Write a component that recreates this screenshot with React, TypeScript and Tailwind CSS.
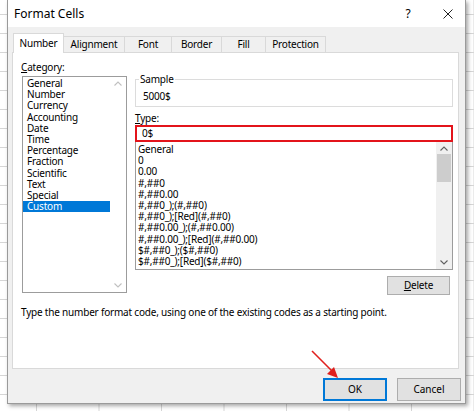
import React from "react";

const categories = ["General","Number","Currency","Accounting","Date","Time","Percentage","Fraction","Scientific","Text","Special","Custom"];
const formats = ["General","0","0.00","#,##0","#,##0.00","#,##0_);(#,##0)","#,##0_);[Red](#,##0)","#,##0.00_);(#,##0.00)","#,##0.00_);[Red](#,##0.00)","$#,##0_);($#,##0)","$#,##0_);[Red]($#,##0)"];
const tabs: { label: string; w: string }[] = [
  { label: "Number", w: "w-[51px]" },
  { label: "Alignment", w: "w-[61px]" },
  { label: "Font", w: "w-[47px]" },
  { label: "Border", w: "w-[50px]" },
  { label: "Fill", w: "w-[44px]" },
  { label: "Protection", w: "w-[60px]" },
];

function Chevron({ up, color }: { up?: boolean; color: string }) {
  return (
    <svg width="8" height="5" viewBox="0 0 8 5">
      <polyline
        points={up ? "0.5,4.5 4,1 7.5,4.5" : "0.5,0.5 4,4 7.5,0.5"}
        fill="none"
        stroke={color}
        strokeWidth="1.1"
      />
    </svg>
  );
}

export default function App() {
  return (
    <div className="relative w-[474px] h-[411px] overflow-hidden bg-white bg-[linear-gradient(to_bottom,#d6d6d6_1px,transparent_1px),linear-gradient(to_right,#d6d6d6_1px,transparent_1px)] bg-[size:62.5px_19px] bg-[position:36px_14px] font-['Noto_Sans',sans-serif] text-black">
      <div className="ml-[7px] w-[459px] h-[404px] flex flex-col bg-[#f0f0f0] border border-[#9a9a9a] border-t-0 shadow-[2px_2px_4px_rgba(0,0,0,0.35)]">
        {/* title bar */}
        <div className="h-[27px] bg-white flex items-center pl-[6px]">
          <span className="text-[12px] leading-none">Format Cells</span>
          <div className="ml-auto flex items-center h-full">
            <div className="w-[34px] flex justify-center text-[12px] leading-none">?</div>
            <div className="w-[6px]" />
            <div className="w-[34px] flex justify-center">
              <svg width="10" height="10" viewBox="0 0 10 10">
                <path d="M0.5 0.5 L9.5 9.5 M9.5 0.5 L0.5 9.5" stroke="#222" strokeWidth="1" />
              </svg>
            </div>
          </div>
        </div>

        {/* tabs */}
        <div className="flex items-end ml-[5px] mt-[6px] h-[19px] relative z-10 tracking-[-0.2px]">
          {tabs.map((t, i) =>
            i === 0 ? (
              <div
                key={t.label}
                className={`${t.w} h-[20px] -mb-[1px] bg-white border border-[#d9d9d9] border-b-0 flex items-center justify-center text-[10px]`}
              >
                {t.label}
              </div>
            ) : (
              <div
                key={t.label}
                className={`${t.w} h-[16px] bg-[#f0f0f0] border border-[#d9d9d9] border-l-0 border-b-0 flex items-center justify-center text-[10px]`}
              >
                {t.label}
              </div>
            )
          )}
        </div>

        {/* panel */}
        <div className="ml-[4px] mr-[6px] h-[317px] bg-white border border-[#d9d9d9] flex flex-col px-[8px] text-[10px] leading-[11.2px] tracking-[-0.2px]">
          <div className="flex mt-[9px]">
            {/* left column */}
            <div className="w-[106px] flex flex-col">
              <div className="h-[13px]">
                <span className="underline">C</span>ategory:
              </div>
              <div className="mt-[1px] ml-[1px] w-[105px] h-[217px] border border-[#9c9c9c] flex">
                <div className="flex-1 flex flex-col pt-[1px]">
                  {categories.map((c) =>
                    c === "Custom" ? (
                      <div key={c} className="h-[11.2px] bg-[#0078d7] text-white pl-[4px]">
                        {c}
                      </div>
                    ) : (
                      <div key={c} className="h-[11.2px] pl-[4px]">
                        {c}
                      </div>
                    )
                  )}
                </div>
                <div className="w-[16px] flex flex-col items-center justify-between py-[4px] bg-white">
                  <Chevron up color="#c0c0c0" />
                  <Chevron color="#c0c0c0" />
                </div>
              </div>
            </div>

            {/* right column */}
            <div className="ml-[8px] w-[321px] flex flex-col">
              <div className="relative mt-[17px] w-[318px] h-[28px] border border-[#dcdcdc] flex items-center pl-[7px] pt-[8px]">
                <span className="absolute -top-[6px] left-[3px] bg-white px-[1px]">Sample</span>
                5000$
              </div>
              <div className="mt-[6px] h-[12px]">
                <span className="underline">T</span>ype:
              </div>
              <div className="h-[17px] border-2 border-[#e3141b] flex items-center pl-[5px]">0$</div>
              <div className="h-[128px] border border-[#9c9c9c] border-t-0 flex">
                <div className="flex-1 flex flex-col pt-[2px] pl-[2px]">
                  {formats.map((f) => (
                    <div key={f} className="h-[11.2px] whitespace-nowrap">
                      {f}
                    </div>
                  ))}
                </div>
                <div className="w-[16px] bg-[#f0f0f0] flex flex-col items-center py-[4px]">
                  <Chevron up color="#606060" />
                  <div className="mt-[3px] w-[14px] h-[28px] bg-[#cdcdcd]" />
                  <div className="flex-1" />
                  <Chevron color="#606060" />
                </div>
              </div>
              <div className="mt-[6px] self-end mr-[3px] w-[63px] h-[19px] bg-[#e1e1e1] border border-[#adadad] flex items-center justify-center">
                <span>
                  <span className="underline">D</span>elete
                </span>
              </div>
            </div>
          </div>
          <div className="mt-[12px]">Type the number format code, using one of the existing codes as a starting point.</div>
        </div>

        {/* footer */}
        <div className="flex justify-end mt-[9px] pr-[4px] gap-[10px] text-[10px]">
          <div className="w-[64px] h-[23px] bg-[#e1e1e1] border-2 border-[#0078d7] flex items-center justify-center">OK</div>
          <div className="w-[64px] h-[23px] bg-[#e1e1e1] border border-[#adadad] flex items-center justify-center">Cancel</div>
        </div>
      </div>

      {/* red arrow annotation */}
      <svg className="absolute left-0 top-0 pointer-events-none" width="474" height="411" viewBox="0 0 474 411">
        <line x1="312" y1="351" x2="333" y2="372" stroke="#e0201e" strokeWidth="1.6" />
        <polygon points="338,378 327,374 334,367" fill="#e0201e" />
      </svg>
    </div>
  );
}
